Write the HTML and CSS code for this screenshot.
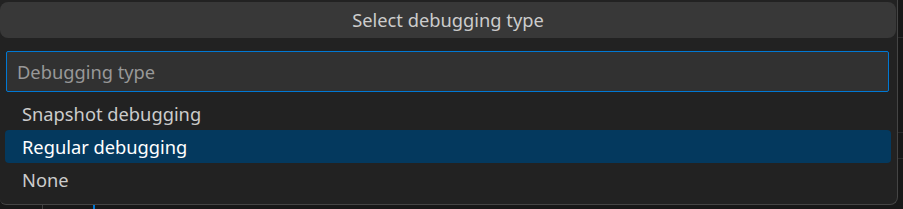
FILE: index.html
```html
<!DOCTYPE html>
<html lang="en">
<head>
    <meta charset="UTF-8">
    <title>Select debugging type</title>
    <link rel="stylesheet" href="styles.css">
</head>
<body>

    <div class="workbench">
        <div class="quick-input">
            <div class="qi-title">Select debugging type</div>
            <div class="qi-box">
                <input class="qi-input" type="text" placeholder="Debugging type">
            </div>
            <ul class="qi-list">
                <li class="qi-item">Snapshot debugging</li>
                <li class="qi-item selected">Regular debugging</li>
                <li class="qi-item">None</li>
            </ul>
        </div>
        <div class="side-gutter">
            <div class="gutter-line first"></div>
            <div class="gutter-line second"></div>
            <div class="gutter-line third"></div>
        </div>
    </div>

    <div class="editor-strip">
        <div class="guide"></div>
        <div class="cursor"></div>
    </div>

</body>
</html>
```

FILE: styles.css
```css
/* Base */
* {
    margin: 0;
    padding: 0;
    box-sizing: border-box;
}

body {
    background: #181818;
    font-family: 'Noto Sans', 'Open Sans', sans-serif;
    color: #cccccc;
    width: 903px;
    height: 209px;
    overflow: hidden;
}

.workbench {
    display: flex;
    height: 205px;
}

/* Quick input widget */
.quick-input {
    width: 898px;
    height: 205px;
    background: #222222;
    border-right: 1px solid #454545;
    border-bottom: 1px solid #454545;
    border-bottom-right-radius: 8px;
    border-bottom-left-radius: 6px;
    padding-top: 2px;
}

.qi-title {
    height: 36px;
    margin-right: 1px;
    background: #383838;
    border-radius: 8px;
    text-align: center;
    font-size: 18.3px;
    line-height: 36px;
    color: #cccccc;
}

.qi-box {
    padding: 13px 8px 0 6px;
}

.qi-input {
    display: block;
    width: 883px;
    height: 41px;
    background: #313131;
    border: 1px solid #0078d4;
    border-radius: 2px;
    padding: 0 10px;
    font-family: inherit;
    font-size: 18.3px;
    color: #cccccc;
    outline: none;
}

.qi-input::placeholder {
    color: #989898;
}

.qi-list {
    list-style: none;
    padding: 5px 6px 0 5px;
}

.qi-item {
    height: 33px;
    line-height: 33px;
    padding-left: 17px;
    font-size: 18.3px;
    color: #cccccc;
    border-radius: 4px;
}

.qi-item.selected {
    background: #04395e;
    color: #ffffff;
}

/* Things peeking out behind the widget */
.side-gutter {
    flex: 1;
}

.gutter-line {
    height: 1px;
    background: #2b2b2b;
}

.gutter-line.first {
    margin-top: 37px;
}

.gutter-line.second {
    margin-top: 94px;
}

.gutter-line.third {
    margin-top: 25px;
}

.editor-strip {
    display: flex;
    height: 4px;
}

.guide {
    width: 1px;
    margin-left: 42px;
    background: #404040;
}

.cursor {
    width: 2px;
    margin-left: 50px;
    background: #0078d4;
}
```
